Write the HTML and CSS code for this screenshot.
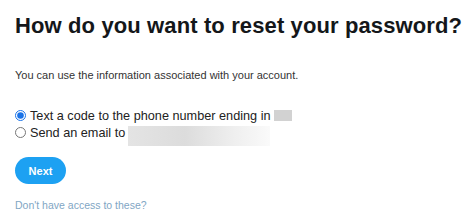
FILE: index.html
```html
<html lang="en">
  <head>
    <meta charset="UTF-8" />
    <meta name="viewport" content="width=device-width, initial-scale=1.0" />
    <title>Reset password</title>
    <link rel="stylesheet" href="styles.css">
  </head>

  <body>
    <div class="page">
      <h1 class="title">How do you want to reset your password?</h1>
      <p class="info">You can use the information associated with your account.</p>

      <div class="options">
        <label class="option">
          <input type="radio" name="method" checked />
          <span>Text a code to the phone number ending in</span>
          <span class="hidden phone"></span>
        </label>
        <label class="option">
          <input type="radio" name="method" />
          <span>Send an email to</span>
          <span class="hidden email"></span>
        </label>
      </div>

      <button class="next">Next</button>

      <a class="help" href="#">Don't have access to these?</a>
    </div>
  </body>
</html>
```

FILE: styles.css
```css
body {
  margin: 0;
  background: white;
  font-family: "Liberation Sans", Arial, sans-serif;
  color: #14171a;
}

.page {
  padding: 13px 0 0 15px;
}

.title {
  margin: 0;
  font-size: 22px;
  letter-spacing: 0.12px;
  font-weight: bold;
  line-height: 26px;
  white-space: nowrap;
  color: #14171a;
}

.info {
  margin: 29px 0 0 0;
  font-size: 11px;
  line-height: 14px;
  color: #333;
}

.options {
  margin-top: 25px;
}

.option {
  display: flex;
  align-items: center;
  height: 17px;
  font-size: 12.7px;
  color: #222;
}

.option input {
  margin: 0 4px 0 0;
  width: 11px;
  height: 11px;
  accent-color: #1a73e8;
}

.hidden {
  display: inline-block;
  margin-left: 3px;
}

.hidden.phone {
  width: 18px;
  height: 11px;
  background: #d2d2d2;
}

.hidden.email {
  width: 142px;
  height: 20px;
  margin-top: 6px;
  background: linear-gradient(90deg, #e4e4e4 0%, #dcdcdc 40%, #efefef 75%, #fafafa 100%);
}

.next {
  display: block;
  margin-top: 16px;
  width: 51px;
  height: 27px;
  border: none;
  border-radius: 14px;
  background: #1da1f2;
  color: white;
  font-family: "Liberation Sans", Arial, sans-serif;
  font-weight: bold;
  font-size: 11px;
  cursor: pointer;
}

.help {
  display: inline-block;
  margin-top: 15px;
  font-size: 10.5px;
  color: #7fa6c4;
  text-decoration: none;
}
```
